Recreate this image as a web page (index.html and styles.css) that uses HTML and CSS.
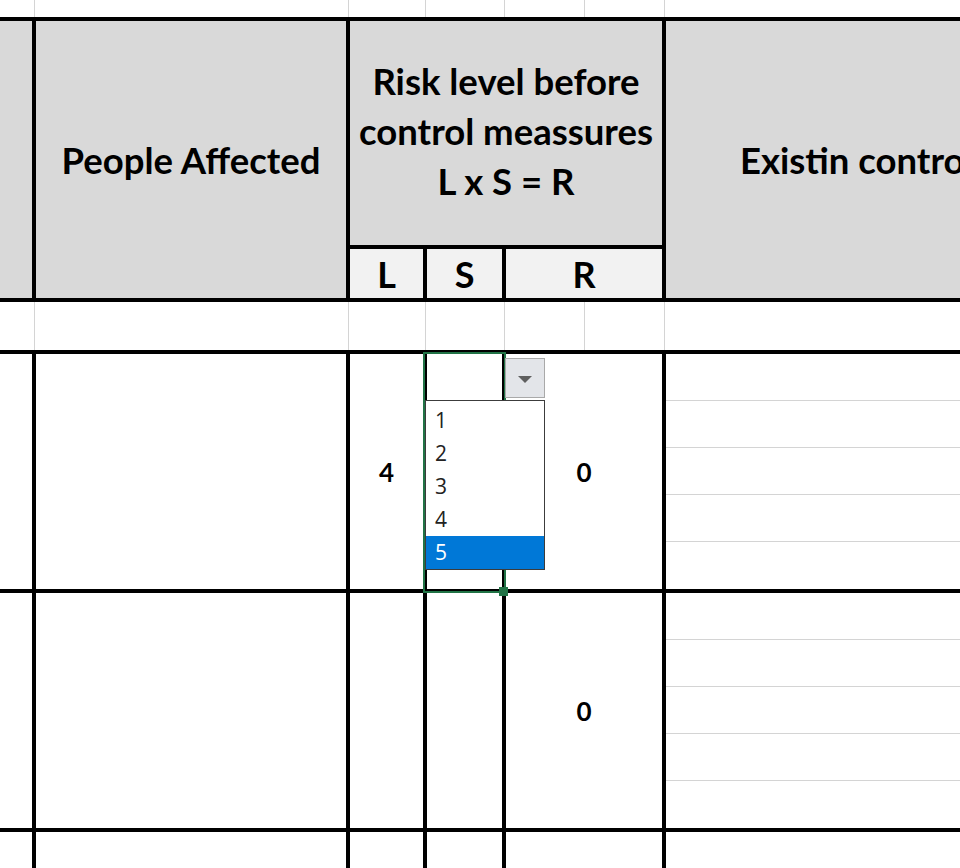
FILE: index.html
```html
<!DOCTYPE html>
<html lang="en">
  <head>
    <meta charset="UTF-8" />
    <meta name="viewport" content="width=device-width, initial-scale=1.0" />
    <title>Risk assessment</title>
    <link rel="stylesheet" href="styles.css">
  </head>
  <body>
    <div class="sheet">
      <div class="strip strip-top">
        <div class="gl w1"></div>
        <div class="gl w2"></div>
        <div class="gl w3"></div>
        <div class="gl w4"></div>
        <div class="gl w5"></div>
        <div class="gl w5"></div>
      </div>

      <div class="head">
        <div class="hcell col-a"></div>
        <div class="hcell col-b">People Affected</div>
        <div class="hcell risk">Risk level before<br />control meassures<br />L x S = R</div>
        <div class="hcell col-e">Existin control measures</div>
        <div class="sub sub-l">L</div>
        <div class="sub sub-s">S</div>
        <div class="sub sub-r">R</div>
      </div>

      <div class="strip strip-gap">
        <div class="gl w1"></div>
        <div class="gl w2"></div>
        <div class="gl w3"></div>
        <div class="gl w4"></div>
        <div class="gl w5"></div>
        <div class="gl w5"></div>
      </div>

      <div class="rows">
        <!-- row 1 -->
        <div class="cell"></div>
        <div class="cell"></div>
        <div class="cell num">4</div>
        <div class="cell"></div>
        <div class="cell num">0</div>
        <div class="cell ctrl">
          <div></div><div></div><div></div><div></div><div></div>
        </div>

        <!-- row 2 -->
        <div class="cell"></div>
        <div class="cell"></div>
        <div class="cell num"></div>
        <div class="cell"></div>
        <div class="cell num">0</div>
        <div class="cell ctrl">
          <div></div><div></div><div></div><div></div><div></div>
        </div>

        <!-- row 3 -->
        <div class="cell"></div>
        <div class="cell"></div>
        <div class="cell"></div>
        <div class="cell"></div>
        <div class="cell"></div>
        <div class="cell ctrl">
          <div></div><div></div><div></div><div></div><div></div>
        </div>
      </div>

      <!-- selected cell with its validation list -->
      <div class="selection"></div>
      <div class="fill-handle"></div>
      <div class="drop-btn"><span class="caret"></span></div>
      <ul class="drop-list">
        <li>1</li>
        <li>2</li>
        <li>3</li>
        <li>4</li>
        <li class="active">5</li>
      </ul>
    </div>
  </body>
</html>
```

FILE: styles.css
```css
html,
body {
  margin: 0;
  height: 100%;
  overflow: hidden;
  background-color: white;
}

.sheet {
  position: relative;
  width: 960px;
  height: 868px;
  overflow: hidden;
  font-family: "Lato", "Liberation Sans", sans-serif;
  color: #000;
}

/* plain excel rows with thin gridlines */
.strip {
  display: flex;
  background-color: white;
}

.strip-top {
  height: 17px;
}

.strip-gap {
  height: 48px;
}

.gl {
  box-sizing: border-box;
  border-right: 1px solid #d4d4d4;
  flex-shrink: 0;
}

.w1 { width: 35px; }
.w2 { width: 314px; }
.w3 { width: 77px; }
.w4 { width: 79px; }
.w5 { width: 80px; }

/* header block */
.head {
  display: grid;
  grid-template-columns: 32px 310px 73px 75px 156px 1fr;
  grid-template-rows: 224px 49px;
  gap: 4px;
  background-color: #000;
  border-top: 4px solid #000;
  border-bottom: 4px solid #000;
}

.hcell {
  background-color: #d9d9d9;
  display: flex;
  align-items: center;
  justify-content: center;
  font-weight: 700;
  font-size: 36.5px;
  white-space: nowrap;
  overflow: hidden;
}

.col-a {
  grid-column: 1;
  grid-row: 1 / span 2;
}

.col-b {
  grid-column: 2;
  grid-row: 1 / span 2;
}

.risk {
  grid-column: 3 / span 3;
  grid-row: 1;
  text-align: center;
  line-height: 50px;
  padding-bottom: 4px;
  box-sizing: border-box;
}

.col-e {
  grid-column: 6;
  grid-row: 1 / span 2;
  justify-content: flex-start;
  padding-left: 74px;
}

.sub {
  grid-row: 2;
  background-color: #f2f2f2;
  display: flex;
  align-items: center;
  justify-content: center;
  font-weight: 700;
  font-size: 36px;
}

.sub-l { grid-column: 3; }
.sub-s { grid-column: 4; }
.sub-r { grid-column: 5; }

/* data rows */
.rows {
  display: grid;
  grid-template-columns: 32px 310px 73px 75px 156px 1fr;
  grid-auto-rows: 235px;
  gap: 4px;
  background-color: #000;
  border-top: 4px solid #000;
}

.cell {
  background-color: white;
}

.num {
  display: flex;
  align-items: center;
  justify-content: center;
  font-weight: 700;
  font-size: 26px;
}

.ctrl {
  display: flex;
  flex-direction: column;
}

.ctrl div {
  height: 47px;
  box-sizing: border-box;
  border-bottom: 1px solid #d4d4d4;
}

.ctrl div:last-child {
  border-bottom: none;
}

/* selection + dropdown */
.selection {
  position: absolute;
  left: 423px;
  top: 352px;
  width: 83px;
  height: 241px;
  box-sizing: border-box;
  border: 2px solid #217346;
}

.fill-handle {
  position: absolute;
  left: 499px;
  top: 587px;
  width: 9px;
  height: 9px;
  background-color: #217346;
}

.drop-btn {
  position: absolute;
  left: 505px;
  top: 358px;
  width: 40px;
  height: 40px;
  box-sizing: border-box;
  border: 1px solid #a9a9a9;
  background-color: #e3e5e9;
  display: flex;
  align-items: center;
  justify-content: center;
}

.caret {
  width: 0;
  height: 0;
  border-left: 7px solid transparent;
  border-right: 7px solid transparent;
  border-top: 7px solid #5f5f5f;
  margin-top: 2px;
}

.drop-list {
  position: absolute;
  left: 425px;
  top: 400px;
  width: 120px;
  height: 170px;
  box-sizing: border-box;
  margin: 0;
  padding: 3px 0 0;
  list-style: none;
  background-color: white;
  border: 1px solid #3c3c3c;
  font-family: "Open Sans", "Noto Sans", sans-serif;
  font-size: 21px;
  color: #222;
}

.drop-list li {
  height: 33px;
  line-height: 33px;
  padding-left: 9px;
}

.drop-list .active {
  background-color: #0078d7;
  color: white;
}
```
